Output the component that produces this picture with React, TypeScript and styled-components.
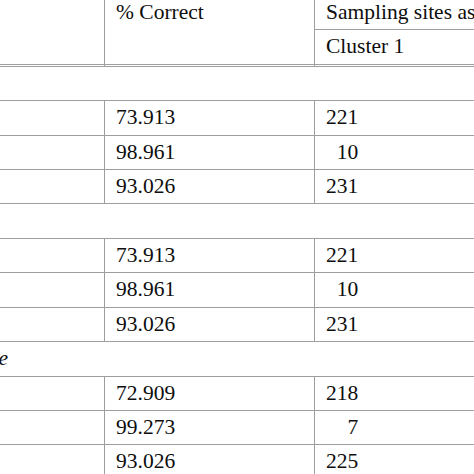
import React from "react";
import styled, { createGlobalStyle } from "styled-components";

const GlobalStyle = createGlobalStyle`
  html, body {
    margin: 0;
    padding: 0;
    background: #ffffff;
  }
`;

const LINE = "#9e9e9e";

const Viewport = styled.div`
  width: 474px;
  height: 474px;
  overflow: hidden;
  background: #ffffff;
`;

const Table = styled.table`
  margin-left: -230px;
  margin-top: -4px;
  border-collapse: separate;
  border-spacing: 0;
  table-layout: fixed;
  width: 955px;
  font-family: "Liberation Serif", "Times New Roman", serif;
  font-size: 21.5px;
  color: #0e0e0e;
`;

const Cell = styled.td<{ $right?: boolean; $bottom?: "single" | "double" | "none" }>`
  padding: 5px 8px 6.3px 11px;
  line-height: 22px;
  text-align: left;
  vertical-align: top;
  white-space: nowrap;
  overflow: hidden;
  border-right: ${(p) => (p.$right ? `1px solid ${LINE}` : "none")};
  border-bottom: ${(p) =>
    p.$bottom === "double"
      ? `3px double ${LINE}`
      : p.$bottom === "none"
      ? "none"
      : `1px solid ${LINE}`};
`;

const HeadCell = styled(Cell).attrs({ as: "th" })`
  font-weight: normal;
`;

const SectionCell = styled(Cell)`
  font-style: italic;
  padding-left: 18px;
  padding-bottom: 6.8px;
`;

const Num = styled.span`
  display: inline-block;
  width: 1.5em;
  text-align: right;
`;

type Row = { label: string; pct: string; c1: string; c2: string };
type Section = { title: string; rows: Row[] };

const sections: Section[] = [
  {
    title: "Original",
    rows: [
      { label: "Cluster 1", pct: "73.913", c1: "221", c2: "78" },
      { label: "Cluster 2", pct: "98.961", c1: "10", c2: "953" },
      { label: "Total", pct: "93.026", c1: "231", c2: "1031" },
    ],
  },
  {
    title: "Cross-validated",
    rows: [
      { label: "Cluster 1", pct: "73.913", c1: "221", c2: "78" },
      { label: "Cluster 2", pct: "98.961", c1: "10", c2: "953" },
      { label: "Total", pct: "93.026", c1: "231", c2: "1031" },
    ],
  },
  {
    title: "Cross-validated, stepwise",
    rows: [
      { label: "Cluster 1", pct: "72.909", c1: "218", c2: "81" },
      { label: "Cluster 2", pct: "99.273", c1: "7", c2: "956" },
      { label: "Total", pct: "93.026", c1: "225", c2: "1037" },
    ],
  },
];

export default function App() {
  return (
    <Viewport>
      <GlobalStyle />
      <Table>
        <colgroup>
          <col style={{ width: 335 }} />
          <col style={{ width: 210 }} />
          <col style={{ width: 205 }} />
          <col style={{ width: 205 }} />
        </colgroup>
        <thead>
          <tr>
            <HeadCell rowSpan={2} $right $bottom="double">
              Model
            </HeadCell>
            <HeadCell rowSpan={2} $right $bottom="double">
              % Correct
            </HeadCell>
            <HeadCell colSpan={2}>Sampling sites assigned to</HeadCell>
          </tr>
          <tr>
            <HeadCell $right $bottom="double">
              Cluster 1
            </HeadCell>
            <HeadCell $bottom="double">Cluster 2</HeadCell>
          </tr>
        </thead>
        <tbody>
          {sections.map((s) => (
            <React.Fragment key={s.title}>
              <tr>
                <SectionCell colSpan={4}>{s.title}</SectionCell>
              </tr>
              {s.rows.map((r) => (
                <tr key={s.title + r.label}>
                  <Cell $right>{r.label}</Cell>
                  <Cell $right>{r.pct}</Cell>
                  <Cell $right>
                    <Num>{r.c1}</Num>
                  </Cell>
                  <Cell>
                    <Num>{r.c2}</Num>
                  </Cell>
                </tr>
              ))}
            </React.Fragment>
          ))}
        </tbody>
      </Table>
    </Viewport>
  );
}
